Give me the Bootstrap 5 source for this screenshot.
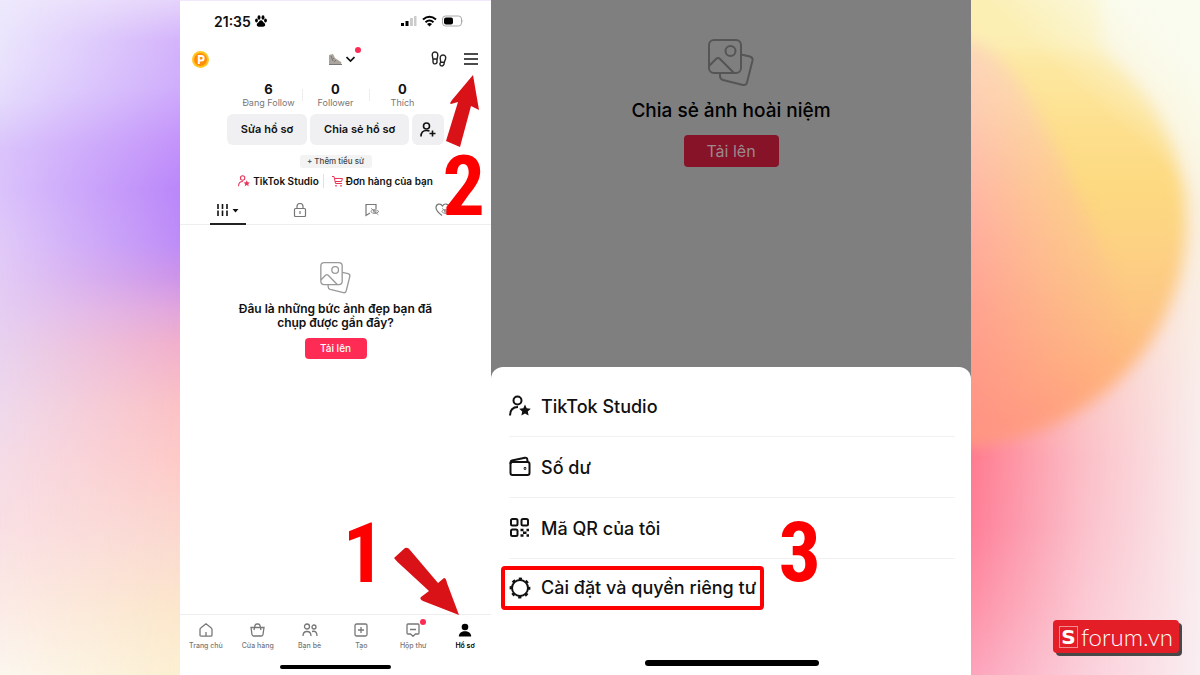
<!DOCTYPE html>
<html lang="vi">
<head>
<meta charset="utf-8">
<meta name="viewport" content="width=device-width, initial-scale=1">
<title>TikTok - Cài đặt và quyền riêng tư</title>
<link href="https://cdn.jsdelivr.net/npm/bootstrap@5.3.0/dist/css/bootstrap.min.css" rel="stylesheet">
<style>
body{font-family:Inter,"Noto Sans",sans-serif;color:#111;background:#fbeef0}
a{color:inherit;text-decoration:none}
svg{display:block;flex:none}
.stage{display:grid;grid-template-columns:180fr 311fr 480fr 229fr;min-height:100vh;overflow:hidden}
.glow-left{position:relative;background:linear-gradient(#e6d4fb,#d4b4fb 6%,#cfadfc 13%,#c596fb 20%,#bb87fa 28%,#be8df8 36%,#cd94ea 41%,#e2a6dc 46%,#f2b0cc 51%,#fbc2c6 60%,#fecac8 68%,#fbdad0 80%,#fce8cc 91%,#fcf0d2)}
.glow-left::before{content:"";position:absolute;inset:0;background:linear-gradient(#ede9fc,#e9e2fd 10%,#e4dafc 15%,#dac4fb 22%,#dac2fb 28%,#e0c9f8 36%,#e4ccf3 45%,#e8d2ee 52%,#f0d9ea 62%,#f5dbe6 68%,#f9dfe3 78%,#fbe8e4 88%,#fcf6ee);-webkit-mask-image:linear-gradient(to right,#000,transparent);mask-image:linear-gradient(to right,#000,transparent)}
.pane{position:relative;display:flex;flex-direction:column}
.phone{background:#fff;border-top:1px solid #f1e8fd}
.status{height:40px;padding:0 27px 0 34px}
.clock{font-size:14px;font-weight:600}
.topbar{height:36px;padding:0 12px}
.bare{border:0;background:none;padding:0;color:inherit}
.reddot{position:absolute;width:6px;height:6px;border-radius:50%;background:#fe2c55}
.account{left:50%;transform:translateX(-50%);padding-left:12px}
.account .reddot{top:-7px;left:100%}
.inbox .reddot{top:-4px;left:calc(50% + 7px)}
.stat{width:67px;text-align:center}
.stat b{display:block;font-size:13px;line-height:16px}
.stat span{display:block;font-size:9px;line-height:12px;color:#777;white-space:nowrap}
.stat+.stat{background:linear-gradient(#eee,#eee) left center/1px 12px no-repeat}
.actions{gap:3px;margin-top:5px}
.graybtn{height:31px;border:0;border-radius:6px;background:#f0f0f2;color:#111;font-size:11px;font-weight:600;padding:0 14px;white-space:nowrap}
.graybtn.narrow{padding:0 8px}
.pill{height:13px;border:0;border-radius:3px;background:#f3f3f4;color:#444;font-size:8px;line-height:13px;padding:0;width:72px;margin-top:10px;font-weight:500;white-space:nowrap}
.mini{font-size:10px;line-height:14px;font-weight:600;margin-top:6px}
.mini a{display:flex;align-items:center;gap:3px}
.tabs{height:30px;padding:0 12px;border-bottom:1px solid #eee;margin-top:7px}
.tabs a{display:flex;align-items:center;justify-content:center;height:30px;color:#777}
.tabs a.active{color:#111}
.tabs a.active::after{content:"";position:absolute;left:18px;right:18px;bottom:0;height:2px;background:#222}
.empty{padding-top:37px}
.redbtn{border:0;background:#fe2c55;color:#fff;padding:0;width:62px;height:21px;font-size:10px}
.ask{font-size:12px;line-height:14px;font-weight:600;text-align:center}
.dock{border-top:1px solid #eee;height:47px}
.dock a{font-size:7px;line-height:9px;font-weight:500;color:#777;text-align:center}
.homebar{width:36%;height:4px;border-radius:3px;background:#000}
.phone .homebar{margin:4px auto 6px}
.dim{background:#7f7f7f;flex:1;min-height:367px;padding-top:39px}
.dim h2{font-size:19px;line-height:24px;font-weight:500;margin:0;color:#000}
.dim .redbtn{width:95px;height:32px;margin-top:12px;font-size:16px;background:#871329;color:#9b898d}
.sheet{background:#fff;border-radius:12px 12px 0 0;margin-top:-12px;padding:9px 16px 9px 18px;position:relative}
.sheet nav{padding-bottom:44px}
.sheet .homebar{width:39%;height:6px}
.option{height:61px;display:flex;align-items:center;gap:10px;font-size:18px;font-weight:500;color:#111;position:relative;border-bottom:1px solid #f1f1f1}
.option:last-child{height:57px;border:0}
.frame{position:absolute;left:-8px;top:7px;width:263px;height:44px;border:4px solid #f00;border-radius:4px}
.step{position:absolute;font-family:"Roboto Condensed","Open Sans Condensed",Roboto,sans-serif;font-weight:700;font-size:84px;line-height:84px;color:#f00}
.over{position:absolute}
.logo{right:21px;bottom:22px;height:33px;width:126px;gap:3px;border-radius:4px;background:#e31e27;box-shadow:3px 3px 0 #484848;color:#fff;padding:0 6px;font-family:Lato,sans-serif}
.logo-s{width:20px;height:22px;border:1px solid #f38c90;font:700 20px/20px "DejaVu Sans",sans-serif;text-align:center}
.logo-t{font-size:24px;line-height:30px;font-weight:300}
</style>
</head>
<body>
<svg width="0" height="0" class="over" aria-hidden="true"><defs>
<symbol id="photos" viewBox="0 0 46 48"><g fill="none" stroke="currentColor" stroke-width="2" stroke-linejoin="round"><rect x="1" y="1" width="32" height="33" rx="5"/><circle cx="22.500" cy="12" r="5"/><path d="M1 27l7-7q2-2 4 0l14 14M33 15.500l9 2q3 1 2.500 4l-5.500 22q-1 3-4 2.500l-20-5q-3-1-3-4v-3"/></g></symbol>
<symbol id="userstar" viewBox="0 0 22 22"><g fill="none" stroke="currentColor" stroke-width="2"><circle cx="8.500" cy="5.500" r="4"/><path d="M1 20.500c0-6 3-8.500 8-8.500"/></g><path fill="currentColor" d="M16 9.500l1.700 3.700 4.100.5-3 2.800.8 4-3.600-2-3.600 2 .8-4-3-2.800 4.100-.5z"/></symbol>
<symbol id="slash" viewBox="0 0 16 16"><g fill="#fff" stroke="currentColor"><path d="M4.500 10.500q4-5 10 0q-5 5-10 0z"/><circle cx="9.500" cy="10.500" r="1.500"/><path d="M5 6.500l9 8"/></g></symbol>
</defs></svg>
<main class="stage">
<div class="glow-left"></div>

<section class="pane phone" aria-label="Hồ sơ">
<div class="status d-flex align-items-center justify-content-between">
<div class="clock d-flex align-items-center gap-1"><span>21:35</span>
<svg width="12" height="12" viewBox="0 0 12 12"><ellipse cx="4" cy="2.500" rx="1.500" ry="2.200"/><ellipse cx="8" cy="2.500" rx="1.500" ry="2.200"/><ellipse cx="1.500" cy="5.500" rx="1.400" ry="1.900"/><ellipse cx="10.500" cy="5.500" rx="1.400" ry="1.900"/><path d="M6 5.200c1.500 0 2 1.800 3.300 2.900 1.800 1.500.7 3.900-1.300 3.700-1.400-.2-2.600-.2-4 0-2 .2-3.100-2.200-1.300-3.700C4 7 4.500 5.200 6 5.200z"/></svg></div>
<svg width="64" height="12" viewBox="0 0 64 12"><path d="M1 8h3v3H1zM5.500 6h3v5h-3z"/><path fill="#ccc" d="M10 3h3v8h-3zM14 1h2.500v10H14z"/><g fill="none" stroke="#000" stroke-width="2"><path d="M23 4.500q6.500-5.500 13 0M25.500 7.200q4-3.500 8 0"/></g><path d="M27 9q2.500-2 5 0L29.500 11.500z"/><rect x="42.500" y="1" width="19" height="10" rx="3" fill="#fff" stroke="#aaa"/><rect x="44" y="2.500" width="9" height="7" rx="2"/><path d="M62.500 4.500q1.500 1.500 0 3z" fill="#aaa"/></svg>
</div>
<div class="topbar d-flex align-items-center justify-content-between position-relative">
<svg width="17" height="17" viewBox="0 0 17 17" role="img" aria-label="P"><circle cx="8.500" cy="8.500" r="8.500" fill="#ffc71f"/><circle cx="8.500" cy="8.500" r="6.500" fill="#ff8c0b"/><path d="M6.800 13V5h2.600a2.100 2.100 0 010 4.400H7" fill="none" stroke="#fff" stroke-width="2"/></svg>
<button class="bare over account d-flex align-items-center gap-1" aria-label="Tài khoản">
<svg width="13" height="11" viewBox="0 0 13 11"><path fill="#aaa49c" d="M0 1l4-1 2 4 6 4q1 1 0 2H0z"/><path stroke="#777" d="M0 10.500h13M2 2l2 5M5 4l-2 2M7 6l-2 2"/></svg>
<svg width="9" height="7" viewBox="0 0 9 7"><path fill="none" stroke="#111" stroke-width="1.700" d="M.5 1l4 4 4-4"/></svg><span class="reddot"></span></button>
<div class="d-flex align-items-center gap-3">
<svg width="16" height="16" viewBox="0 0 16 16" fill="none" stroke="#222" stroke-width="1.400"><path d="M4 1C1.500 1 1 3 1.400 5L2 8.500v2.300c0 3 4 2.500 4 0V8.500L6.700 5C7 3 6.500 1 4 1zM2 8h4M12 4c-2.500 0-3 2-2.700 4l.4 3-.7 1.500c-.6 2.500 3 3.500 4 .8l.4-2.300L14.500 8c.5-2 0-4-2.500-4zM9.500 11l4 .5"/></svg>
<button class="bare" aria-label="Menu"><svg width="16" height="14" viewBox="0 0 16 14"><path stroke="#111" stroke-width="1.600" d="M1 2h14M1 7h14M1 12h14"/></svg></button></div>
</div>
<div class="d-flex justify-content-center pt-1"><div class="stat"><b>6</b><span>Đang Follow</span></div><div class="stat"><b>0</b><span>Follower</span></div><div class="stat"><b>0</b><span>Thích</span></div></div>
<div class="actions d-flex justify-content-center"><button class="graybtn">Sửa hồ sơ</button><button class="graybtn">Chia sẻ hồ sơ</button><button class="graybtn narrow" aria-label="Thêm bạn"><svg width="16" height="16" viewBox="0 0 16 16" fill="none" stroke="#111" stroke-width="1.600"><circle cx="6.500" cy="4" r="3"/><path d="M1 14.500c0-4 2-6 5.500-6 1.500 0 2.500.3 3 .8M12.500 8.500v6M9.500 11.500h6"/></svg></button></div>
<button class="pill mx-auto">+ Thêm tiểu sử</button>
<div class="mini d-flex justify-content-center align-items-center">
<a href="#" class="pe-1"><svg width="12" height="12" color="#e9375b"><use href="#userstar"/></svg>TikTok Studio</a>
<a href="#" class="border-start ps-2"><svg width="11" height="11" viewBox="0 0 11 11" fill="none" stroke="#e9375b"><path d="M0 .5h2l1.500 7H10M2.300 2.500H10.500L9.500 5.500H3"/><circle cx="4" cy="9.800" r=".5"/><circle cx="9" cy="9.800" r=".5"/></svg>Đơn hàng của bạn</a></div>
<nav class="tabs row g-0" aria-label="Nội dung">
<a href="#" class="col active position-relative" aria-label="Bài đăng"><svg width="23" height="12" viewBox="0 0 23 12"><path stroke="currentColor" stroke-width="1.600" d="M2 0v5M2 6.500V12M6.500 0v5M6.500 6.500V12M11 0v5M11 6.500V12"/><path fill="currentColor" d="M16.500 5h6l-3 3.500z"/></svg></a>
<a href="#" class="col" aria-label="Riêng tư"><svg width="14" height="14" viewBox="0 0 14 14" fill="none" stroke="currentColor" stroke-width="1.200"><rect x="1.500" y="5.500" width="11" height="8" rx="1"/><path d="M4 5.500V3.500a3 3 0 016 0v2M7 8v3"/></svg></a>
<a href="#" class="col" aria-label="Đã lưu"><svg width="15" height="14" viewBox="0 0 15 14"><path fill="none" stroke="currentColor" stroke-width="1.200" d="M12 6V1.500H2V12.500L6 10"/><use href="#slash" width="13" height="13" x="3"/></svg></a>
<a href="#" class="col" aria-label="Đã thích"><svg width="16" height="14" viewBox="0 0 16 14"><path fill="none" stroke="currentColor" stroke-width="1.200" d="M7 12.500C3 9.500 1 7 1 4.500c0-4 5-4.500 6.500-1.500 1.500-3 6.500-2.500 6.500 1"/><use href="#slash" width="13" height="13" x="3"/></svg></a></nav>
<div class="empty d-flex flex-column align-items-center mb-auto"><svg width="31" height="32" color="#999"><use href="#photos"/></svg>
<div class="ask mt-2 pb-2">Đâu là những bức ảnh đẹp bạn đã<br>chụp được gần đây?</div>
<button class="redbtn rounded-1 fw-medium">Tải lên</button></div>
<nav class="dock row g-0 pt-2" aria-label="Điều hướng">
<a href="#" class="col"><svg class="mx-auto mb-1" width="14" height="14" viewBox="0 0 14 14" fill="none" stroke="currentColor" stroke-width="1.300"><path d="M1 6.500Q1 5.500 2 4.800L7 .8l5 4q1 .7 1 1.700v5.500q0 1.200-1.200 1.200H2.200Q1 13.200 1 12zM7 9v4"/></svg>Trang chủ</a>
<a href="#" class="col"><svg class="mx-auto mb-1" width="15" height="14" viewBox="0 0 15 14" fill="none" stroke="currentColor" stroke-width="1.300"><path d="M1 4.500h13L13 11.500q-.2 1.500-1.500 1.500h-8Q2.200 13 2 11.500zM4 7L5 2.500Q5.300 1 7 1h1q1.700 0 2 1.500L11 7"/></svg>Cửa hàng</a>
<a href="#" class="col"><svg class="mx-auto mb-1" width="16" height="14" viewBox="0 0 16 14" fill="none" stroke="currentColor" stroke-width="1.300"><circle cx="5" cy="3.500" r="2.500"/><circle cx="12" cy="4" r="2"/><path d="M1 13c0-6 8-6 8 0M10 8.500c4-1 5 1.500 5 4.500"/></svg>Bạn bè</a>
<a href="#" class="col"><svg class="mx-auto mb-1" width="14" height="14" viewBox="0 0 14 14" fill="none" stroke="currentColor" stroke-width="1.300"><rect x="1" y="1" width="12" height="12" rx="1.500"/><path d="M7 4v6M4 7h6"/></svg>Tạo</a>
<a href="#" class="col inbox position-relative"><svg class="mx-auto mb-1" width="14" height="14" viewBox="0 0 14 14" fill="none" stroke="currentColor" stroke-width="1.300"><path d="M2 1h10q1 0 1 1v8q0 1-1 1H9.500L7 13.300 4.500 11H2q-1 0-1-1V2q0-1 1-1zM4 6.500h6"/></svg><span class="reddot"></span>Hộp thư</a>
<a href="#" class="col text-black fw-semibold"><svg class="mx-auto mb-1" width="14" height="14" viewBox="0 0 14 14" fill="currentColor"><circle cx="7" cy="4" r="3.300"/><path d="M.8 13.500C.8 6.500 13.200 6.500 13.200 13.500z"/></svg>Hồ sơ</a></nav>
<div class="homebar"></div>

<svg class="over" style="right:11px;top:74px" width="34" height="73" viewBox="0 0 34 73"><path fill="#d91218" d="M27 0L33 35 25 31 14 72 0 66 12 27 5 29Q3 29 6 25z"/></svg>
<span class="step" style="right:6px;top:144px">2</span>
<span class="step" style="right:106px;bottom:79px">1</span>
<svg class="over" style="right:31px;bottom:60px" width="66" height="68" viewBox="0 0 66 68"><path fill="#d91218" d="M0 11L11 1q3-1 5 2L44 36l6-5q2 0 3 5L65 68 29 54q-4-2-2-4l8-6L9 20Q3 15 0 11z"/></svg>
</section>

<section class="pane bg-white" aria-label="Menu">
<div class="dim d-flex flex-column align-items-center"><svg width="46" height="48" color="#555"><use href="#photos"/></svg><h2 class="mt-2 pt-1">Chia sẻ ảnh hoài niệm</h2>
<button class="redbtn rounded-1">Tải lên</button></div>
<div class="sheet"><nav>
<a href="#" class="option"><svg width="22" height="22"><use href="#userstar"/></svg>TikTok Studio</a>
<a href="#" class="option"><svg width="22" height="22" viewBox="0 0 22 22" fill="none" stroke="currentColor" stroke-width="2"><rect x="1.500" y="6" width="19" height="13" rx="2"/><path d="M1.500 8V6.500Q1.500 5 3 4.500L16 1.800q2-.4 2.300 1.500l.3 3"/><circle cx="16" cy="12.500" r=".4"/></svg>Số dư</a>
<a href="#" class="option"><svg width="22" height="22" viewBox="0 0 22 22" fill="none" stroke="currentColor" stroke-width="2"><rect x="2" y="2" width="6.500" height="6.500" rx="1.500"/><rect x="12.500" y="2" width="6.500" height="6.500" rx="1.500"/><rect x="2" y="12.500" width="6.500" height="6.500" rx="1.500"/><path stroke-width="2.500" d="M11.500 13h3M17.500 13H20M14 15.700h3.500M11.500 18.500h3M17.500 18.500H20"/></svg>Mã QR của tôi</a>
<a href="#" class="option"><svg width="22" height="22" viewBox="0 0 22 22" fill="none" stroke="currentColor" stroke-width="2"><circle cx="11" cy="11" r="8"/><circle cx="11" cy="11" r="9.200" stroke-width="2.400" stroke-dasharray="3.225 4" stroke-dashoffset="1.500"/></svg>Cài đặt và quyền riêng tư<span class="frame"></span></a></nav>
<div class="homebar mx-auto"></div>
<span class="step" style="right:150px;bottom:80px">3</span></div>
</section>

<div class="position-relative">
<svg class="over w-100 h-100" viewBox="0 0 229 675" preserveAspectRatio="none" aria-hidden="true"><defs>
<linearGradient id="gl" x2="0" y2="1"><stop stop-color="#fbf0b8"/><stop offset=".6" stop-color="#ff8a8c"/><stop offset=".68" stop-color="#ff7c90"/><stop offset=".78" stop-color="#fe7f98"/><stop offset=".9" stop-color="#fe92a8"/><stop offset="1" stop-color="#fda4bb"/></linearGradient>
<linearGradient id="gr" x2="0" y2="1"><stop stop-color="#f9fdf4"/><stop offset=".15" stop-color="#faf8e2"/><stop offset=".35" stop-color="#faefe0"/><stop offset=".6" stop-color="#f9edec"/><stop offset="1" stop-color="#f9eef1"/></linearGradient>
<linearGradient id="fade"><stop stop-color="#000"/><stop offset=".5" stop-color="#999"/><stop offset="1" stop-color="#fff"/></linearGradient><mask id="mk"><rect width="229" height="675" fill="url(#fade)"/></mask>
<linearGradient id="disc" gradientUnits="userSpaceOnUse" x1="0" y1="0" x2="0" y2="445"><stop stop-color="#fcf1bd"/><stop offset=".14" stop-color="#fde8a2"/><stop offset=".3" stop-color="#fddf8c"/><stop offset=".43" stop-color="#fdd980"/><stop offset=".55" stop-color="#fdd283"/><stop offset=".7" stop-color="#fdc582"/><stop offset=".85" stop-color="#ffb47c"/><stop offset="1" stop-color="#ff9f80"/></linearGradient>
<linearGradient id="warm" gradientUnits="userSpaceOnUse" x1="0" y1="0" x2="0" y2="445"><stop offset=".05" stop-color="#fcd6bc" stop-opacity="0"/><stop offset=".12" stop-color="#fcd2bc"/><stop offset=".24" stop-color="#fdc8b8"/><stop offset=".38" stop-color="#feb6b0"/><stop offset=".52" stop-color="#ffa6a4"/><stop offset=".7" stop-color="#ff9a92"/><stop offset="1" stop-color="#ff8d82"/></linearGradient>
<linearGradient id="out"><stop stop-color="#fff"/><stop offset=".5" stop-color="#777"/><stop offset="1" stop-color="#000"/></linearGradient><mask id="mo"><rect x="-30" width="190" height="675" fill="url(#out)"/></mask>
<linearGradient id="tr" gradientUnits="userSpaceOnUse" x1="130" y1="110" x2="215" y2="20"><stop stop-color="#fafcf0" stop-opacity="0"/><stop offset="1" stop-color="#fafcf0"/></linearGradient>
<filter id="soft" x="-20%" y="-20%" width="140%" height="140%"><feGaussianBlur stdDeviation="8"/></filter></defs>
<rect width="229" height="675" fill="url(#gl)"/><rect width="229" height="675" fill="url(#gr)" mask="url(#mk)"/>
<g filter="url(#soft)"><circle cx="-4" cy="222" r="219" fill="url(#disc)"/><rect x="-40" y="-30" width="170" height="80" fill="#fcefb4"/></g>
<g mask="url(#mo)"><path d="M-40 30Q20 30 60 100T170 330Q110 435 0 440H-40z" fill="url(#warm)" filter="url(#soft)"/></g>
<rect width="229" height="200" fill="url(#tr)"/></svg>
<a href="#" class="logo over d-flex align-items-center" aria-label="Sforum.vn"><span class="logo-s">S</span><span class="logo-t">forum.vn</span></a>
</div>
</main>
<script src="https://cdn.jsdelivr.net/npm/bootstrap@5.3.0/dist/js/bootstrap.bundle.min.js"></script>
</body>
</html>
